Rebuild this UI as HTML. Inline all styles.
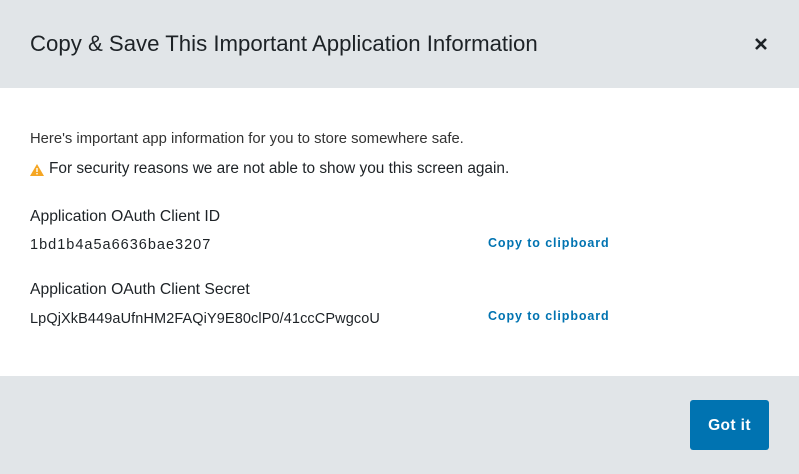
<!DOCTYPE html>
<html><head><style>
body{margin:0;width:799px;height:474px;font-family:"Liberation Sans",sans-serif;color:#1d2226;background:#fff;position:relative;overflow:hidden}
.hdr{position:absolute;left:0;top:0;width:799px;height:88px;background:#e1e5e8}
.ftr{position:absolute;left:0;top:376px;width:799px;height:98px;background:#e1e5e8}
.t{position:absolute;white-space:nowrap}
.btn{position:absolute;left:690px;top:400px;width:79px;height:50px;background:#0073b1;border-radius:3px;color:#fff;font-weight:bold;font-size:15.5px;line-height:52px;text-align:center;letter-spacing:0.4px}
.link{color:#0073b1;font-weight:bold;font-size:12.5px;letter-spacing:0.9px}
</style></head><body>
<div class="hdr"></div>
<div class="t" style="left:30px;top:31px;font-size:22.2px;color:#1d2226">Copy &amp; Save This Important Application Information</div>
<svg class="t" style="left:754px;top:37px" width="14" height="14" viewBox="0 0 14 14"><path d="M2 2L12 12M12 2L2 12" stroke="#1d2226" stroke-width="2.6"/></svg>
<div class="t" style="left:30px;top:131px;font-size:14.8px;color:#333">Here's important app information for you to store somewhere safe.</div>
<svg class="t" style="left:30px;top:164px" width="14" height="12" viewBox="0 0 14 12"><path d="M7 0L14 12H0Z" fill="#f5a623"/><rect x="6.3" y="4" width="1.4" height="4" fill="#fff"/><rect x="6.3" y="9" width="1.4" height="1.4" fill="#fff"/></svg>
<div class="t" style="left:49px;top:160px;font-size:15.4px">For security reasons we are not able to show you this screen again.</div>
<div class="t" style="left:30px;top:208px;font-size:15.7px">Application OAuth Client ID</div>
<div class="t" style="left:30px;top:237px;font-size:14.5px;letter-spacing:1px">1bd1b4a5a6636bae3207</div>
<div class="t link" style="left:488px;top:236px">Copy to clipboard</div>
<div class="t" style="left:30px;top:281px;font-size:15.7px">Application OAuth Client Secret</div>
<div class="t" style="left:30px;top:311px;font-size:14.5px;letter-spacing:0.1px">LpQjXkB449aUfnHM2FAQiY9E80clP0/41ccCPwgcoU</div>
<div class="t link" style="left:488px;top:309px">Copy to clipboard</div>
<div class="ftr"></div>
<div class="btn">Got it</div>
</body></html>
